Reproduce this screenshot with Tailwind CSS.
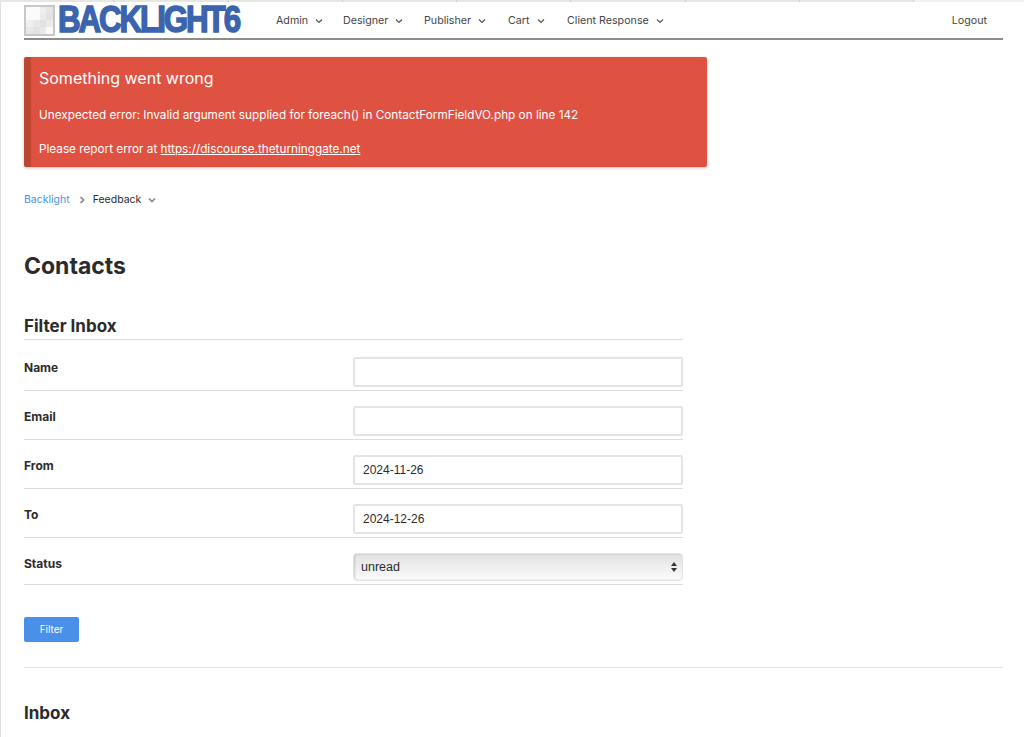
<!DOCTYPE html>
<html lang="en">
<head>
  <meta charset="UTF-8" />
  <meta name="viewport" content="width=device-width, initial-scale=1.0" />
  <title>Contacts</title>
  <script src="https://cdn.jsdelivr.net/npm/@tailwindcss/browser@4"></script>
</head>
<body class="h-[737px] overflow-hidden bg-white font-['Inter',sans-serif] text-[#2b2b2b]">
  <!-- browser tab strip -->
  <div class="flex h-[2px] bg-[#e6e6e2]">
    <div class="w-[114.25px] border-r border-[#cfcfcb]"></div>
    <div class="w-[114.25px] border-r border-[#cfcfcb]"></div>
    <div class="w-[114.25px] border-r border-[#cfcfcb]"></div>
    <div class="w-[114.25px] border-r border-[#cfcfcb]"></div>
    <div class="w-[114.25px] border-r border-[#cfcfcb]"></div>
    <div class="w-[114.25px] border-r border-[#cfcfcb]"></div>
    <div class="w-[114.25px] border-r border-[#cfcfcb]"></div>
    <div class="w-[114.25px] border-r border-[#cfcfcb]"></div>
    <div class="flex-1 bg-[#f1f1f1]"></div>
  </div>

  <div class="h-[735px] overflow-hidden border-l border-[#e0e0e0] pl-[23px] pr-[21px]">
    <!-- nav -->
    <header class="flex h-[38px] items-center border-b-2 border-[#8c8c8c] text-[10.7px] text-[#444]">
      <div class="flex h-[36px] w-[252px] items-center">
        <div class="grid h-[31px] w-[31px] shrink-0 grid-cols-4 grid-rows-4 border-2 border-[#c8c8c8] bg-[#f4f4f4]">
          <div class="col-span-2 row-span-2 bg-[#fbfbfb]"></div>
          <div class="bg-[#eeeeee]"></div><div class="bg-[#e6e6e6]"></div>
          <div class="bg-[#ebebeb]"></div><div class="bg-[#e2e2e2]"></div>
          <div class="bg-[#efefef]"></div><div class="bg-[#e8e8e8]"></div><div class="bg-[#e2e2e2]"></div><div class="bg-[#ebebeb]"></div>
          <div class="bg-[#e8e8e8]"></div><div class="bg-[#e2e2e2]"></div><div class="bg-[#e8e8e8]"></div><div class="bg-[#fafafa]"></div>
        </div>
        <span class="-my-[3px] ml-[3px] origin-left scale-x-[0.87] font-['Liberation_Sans',sans-serif] text-[36px] leading-[42px] font-bold tracking-[-2.4px] whitespace-nowrap text-[#3b64ad] [-webkit-text-stroke:1.5px_#3b64ad]">BACKLIGHT6</span>
      </div>
      <nav class="mt-[2px] flex items-center">
        <a class="flex w-[67px] items-center">Admin<svg class="ml-[7px] h-[8px] w-[8px]" viewBox="0 0 8 8" fill="none" stroke="#555" stroke-width="1.2"><path d="M1 2.5 4 5.5 7 2.5"/></svg></a>
        <a class="flex w-[81px] items-center">Designer<svg class="ml-[7px] h-[8px] w-[8px]" viewBox="0 0 8 8" fill="none" stroke="#555" stroke-width="1.2"><path d="M1 2.5 4 5.5 7 2.5"/></svg></a>
        <a class="flex w-[84px] items-center">Publisher<svg class="ml-[7px] h-[8px] w-[8px]" viewBox="0 0 8 8" fill="none" stroke="#555" stroke-width="1.2"><path d="M1 2.5 4 5.5 7 2.5"/></svg></a>
        <a class="flex w-[59px] items-center">Cart<svg class="ml-[7px] h-[8px] w-[8px]" viewBox="0 0 8 8" fill="none" stroke="#555" stroke-width="1.2"><path d="M1 2.5 4 5.5 7 2.5"/></svg></a>
        <a class="flex items-center">Client Response<svg class="ml-[7px] h-[8px] w-[8px]" viewBox="0 0 8 8" fill="none" stroke="#555" stroke-width="1.2"><path d="M1 2.5 4 5.5 7 2.5"/></svg></a>
      </nav>
      <a class="mt-[2px] mr-[16px] ml-auto">Logout</a>
    </header>

    <!-- error -->
    <div class="mt-[17px] h-[110px] w-[683px] rounded-[2px] border-l-[7px] border-[#bd4633] bg-[#df5242] pt-[10px] pl-[8px] text-white shadow-[0_1px_3px_rgba(0,0,0,0.25)]">
      <h3 class="text-[16px] leading-[22px]">Something went wrong</h3>
      <p class="mt-[17px] text-[11.75px] leading-[18px]">Unexpected error: Invalid argument supplied for foreach() in ContactFormFieldVO.php on line 142</p>
      <p class="mt-[16px] text-[11.75px] leading-[18px]">Please report error at <a class="underline">https://discourse.theturninggate.net</a></p>
    </div>

    <!-- breadcrumb -->
    <div class="mt-[26px] flex h-[14px] items-center text-[10.5px]">
      <a class="text-[#4a90e2]">Backlight</a>
      <svg class="mr-[7px] ml-[8px] h-[8px] w-[8px]" viewBox="0 0 8 8" fill="none" stroke="#888" stroke-width="1.7"><path d="M2.5 1 5.5 4 2.5 7"/></svg>
      <span>Feedback</span>
      <svg class="ml-[7px] h-[8px] w-[8px]" viewBox="0 0 8 8" fill="none" stroke="#888" stroke-width="1.7"><path d="M1 2.5 4 5.5 7 2.5"/></svg>
    </div>

    <h1 class="mt-[44px] text-[23px] leading-[30px] font-bold">Contacts</h1>

    <!-- filter -->
    <form class="mt-[34px] w-[659px]">
      <h2 class="border-b border-[#dcdcdc] pb-[2px] text-[17px] leading-[22px] font-bold">Filter Inbox</h2>

      <div class="flex h-[51px] border-b border-[#dcdcdc] pt-[17px]">
        <label class="mt-px w-[329px] text-[12px] leading-[20px] font-bold">Name</label>
        <input class="h-[30px] w-[330px] rounded-[2px] border-2 border-[#e4e4e4] px-[8px] font-['Liberation_Sans',sans-serif] text-[12px]" type="text" />
      </div>
      <div class="flex h-[49px] border-b border-[#dcdcdc] pt-[15px]">
        <label class="mt-px w-[329px] text-[12px] leading-[20px] font-bold">Email</label>
        <input class="h-[30px] w-[330px] rounded-[2px] border-2 border-[#e4e4e4] px-[8px] font-['Liberation_Sans',sans-serif] text-[12px]" type="text" />
      </div>
      <div class="flex h-[49px] border-b border-[#dcdcdc] pt-[15px]">
        <label class="mt-px w-[329px] text-[12px] leading-[20px] font-bold">From</label>
        <input class="h-[30px] w-[330px] rounded-[2px] border-2 border-[#e4e4e4] px-[8px] font-['Liberation_Sans',sans-serif] text-[12px]" type="text" value="2024-11-26" />
      </div>
      <div class="flex h-[49px] border-b border-[#dcdcdc] pt-[15px]">
        <label class="mt-px w-[329px] text-[12px] leading-[20px] font-bold">To</label>
        <input class="h-[30px] w-[330px] rounded-[2px] border-2 border-[#e4e4e4] px-[8px] font-['Liberation_Sans',sans-serif] text-[12px]" type="text" value="2024-12-26" />
      </div>
      <div class="flex h-[47px] border-b border-[#dcdcdc] pt-[15px]">
        <label class="mt-px w-[329px] text-[12px] leading-[20px] font-bold">Status</label>
        <div class="flex h-[28px] w-[330px] items-center justify-between rounded-[4px] border border-[#e2e2e2] bg-gradient-to-b from-[#e2e2e2] to-[#fbfbfb] pr-[5px] pl-[7px] font-['Liberation_Sans',sans-serif] text-[12.5px] shadow-[inset_1px_0_2px_rgba(0,0,0,0.15)]">
          <span>unread</span>
          <svg class="h-[12px] w-[6px]" viewBox="0 0 6 12" fill="#333"><path d="M3 1 6 5H0ZM3 11 0 7H6Z"/></svg>
        </div>
      </div>

      <button class="mt-[32px] h-[25px] w-[55px] rounded-[2px] bg-[#4a90e8] text-[10px] text-white" type="button">Filter</button>
    </form>

    <hr class="mt-[25px] border-[#e2e2e2]" />

    <h2 class="mt-[33px] text-[17px] leading-[24px] font-bold">Inbox</h2>
  </div>
</body>
</html>
